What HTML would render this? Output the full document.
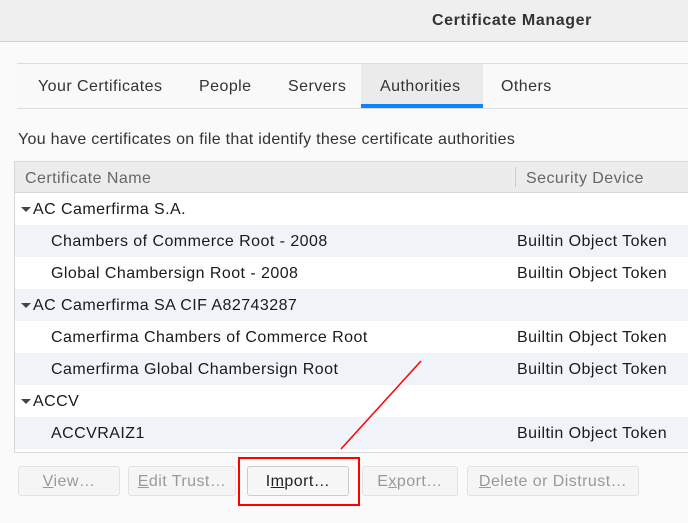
<!DOCTYPE html>
<html><head><style>
*{margin:0;padding:0;box-sizing:border-box}
body{width:688px;height:523px;background:#fafafa;font-family:"Liberation Sans",sans-serif;color:#1a1a1a;position:relative;overflow:hidden;letter-spacing:0.45px}
.title{position:absolute;left:0;top:0;width:688px;height:42px;background:#efefef;border-bottom:1px solid #d2d2d2}
.title span{position:absolute;left:432px;top:12px;font-size:16px;font-weight:bold;color:#333;letter-spacing:0.6px}
.tabs{position:absolute;left:17px;top:63px;width:671px;height:46px;background:#f9f9f9;border-top:1px solid #dcdcdc;border-bottom:1px solid #dcdcdc}
.tab{position:absolute;top:14px;font-size:16px;color:#333}
.sel{position:absolute;left:344px;top:0;width:122px;height:44px;background:#ebebeb;border-bottom:4px solid #0a84ff}
.desc{position:absolute;left:18px;top:131px;font-size:16px;color:#333;letter-spacing:0.3px}
.table{position:absolute;left:14px;top:161px;width:680px;height:292px;background:#fff;border:1px solid #d8d8d8}
.hdr{height:31px;background:#ececec;border-bottom:1px solid #d8d8d8;position:relative;font-size:16px;color:#666}
.row{height:32px;position:relative;font-size:16px;color:#1a1a1a}
.alt{background:#f0f4f9}
.row span,.hdr span{position:absolute;top:8px;white-space:nowrap}
.tri{position:absolute;left:6px;top:14px;width:0;height:0;border-left:5px solid transparent;border-right:5px solid transparent;border-top:5px solid #444}
.btn{position:absolute;top:466px;height:30px;border:1px solid #e2e2e2;border-radius:3px;background:#f5f5f5;color:#999;font-size:16px;text-align:center;line-height:30px}
</style></head><body>
<div class="title"><span>Certificate Manager</span></div>
<div class="tabs">
<div class="sel"></div>
<span class="tab" style="left:21px">Your Certificates</span>
<span class="tab" style="left:182px">People</span>
<span class="tab" style="left:271px">Servers</span>
<span class="tab" style="left:363px">Authorities</span>
<span class="tab" style="left:484px">Others</span>
</div>
<div class="desc">You have certificates on file that identify these certificate authorities</div>
<div class="table">
<div class="hdr"><span style="left:10px">Certificate Name</span><div style="position:absolute;left:500px;top:5px;width:1px;height:20px;background:#ccc"></div><span style="left:511px">Security Device</span></div>
<div class="row"><div class="tri"></div><span style="left:18px">AC Camerfirma S.A.</span></div>
<div class="row alt"><span style="left:36px">Chambers of Commerce Root - 2008</span><span style="left:502px">Builtin Object Token</span></div>
<div class="row"><span style="left:36px">Global Chambersign Root - 2008</span><span style="left:502px">Builtin Object Token</span></div>
<div class="row alt"><div class="tri"></div><span style="left:18px">AC Camerfirma SA CIF A82743287</span></div>
<div class="row"><span style="left:36px">Camerfirma Chambers of Commerce Root</span><span style="left:502px">Builtin Object Token</span></div>
<div class="row alt"><span style="left:36px">Camerfirma Global Chambersign Root</span><span style="left:502px">Builtin Object Token</span></div>
<div class="row"><div class="tri"></div><span style="left:18px">ACCV</span></div>
<div class="row alt"><span style="left:36px">ACCVRAIZ1</span><span style="left:502px">Builtin Object Token</span></div>
</div>
<div class="btn" style="left:18px;width:102px"><u>V</u>iew…</div>
<div class="btn" style="left:128px;width:108px"><u>E</u>dit Trust…</div>
<div class="btn" style="left:247px;width:102px;color:#222;border-color:#ccc;background:#f7f7f7">I<u>m</u>port…</div>
<div class="btn" style="left:362px;width:96px">E<u>x</u>port…</div>
<div class="btn" style="left:467px;width:172px"><u>D</u>elete or Distrust…</div>
<div style="position:absolute;left:238px;top:457px;width:122px;height:49px;border:2px solid #f00"></div>
<svg style="position:absolute;left:0;top:0" width="688" height="523"><line x1="421" y1="361" x2="341" y2="449" stroke="#f00" stroke-width="1.5"/></svg>
</body></html>
